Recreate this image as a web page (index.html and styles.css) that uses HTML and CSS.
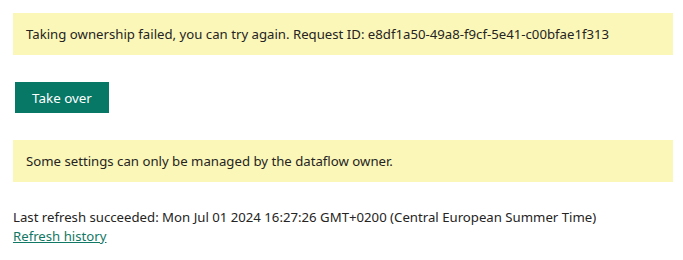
FILE: index.html
```html
<!DOCTYPE html>
<html>
<head>
<meta charset="utf-8">
<link rel="stylesheet" href="styles.css">
</head>
<body>
<div class="page">
  <div class="banner banner-first">Taking ownership failed, you can try again. Request ID: e8df1a50-49a8-f9cf-5e41-c00bfae1f313</div>
  <button class="btn">Take over</button>
  <div class="banner banner-second">Some settings can only be managed by the dataflow owner.</div>
  <div class="refresh">
    <div class="refresh-text">Last refresh succeeded: Mon Jul 01 2024 16:27:26 GMT+0200 (Central European Summer Time)</div>
    <a class="refresh-link" href="#">Refresh history</a>
  </div>
</div>
</body>
</html>
```
FILE: styles.css
```css
html, body {
  margin: 0;
  padding: 0;
  background: #ffffff;
}
body {
  font-family: "Noto Sans", "Open Sans", sans-serif;
  font-size: 13.2px;
  color: #252423;
}
.page {
  width: 660px;
  padding: 13px 0 0 13px;
  display: flex;
  flex-direction: column;
  align-items: flex-start;
}
.banner {
  box-sizing: border-box;
  width: 660px;
  background: #fbf7b8;
  padding: 0 13px;
  display: flex;
  align-items: center;
}
.banner-first {
  height: 42px;
}
.btn {
  margin: 27px 0 0 2px;
  width: 94px;
  height: 31px;
  border: none;
  background: #077766;
  color: #ffffff;
  font-family: inherit;
  font-size: 13.4px;
  padding: 0;
  cursor: pointer;
}
.banner-second {
  margin-top: 27px;
  height: 42px;
}
.refresh {
  margin-top: 26px;
  line-height: 19px;
}
.refresh-link {
  color: #117865;
  text-decoration: underline;
}
```
